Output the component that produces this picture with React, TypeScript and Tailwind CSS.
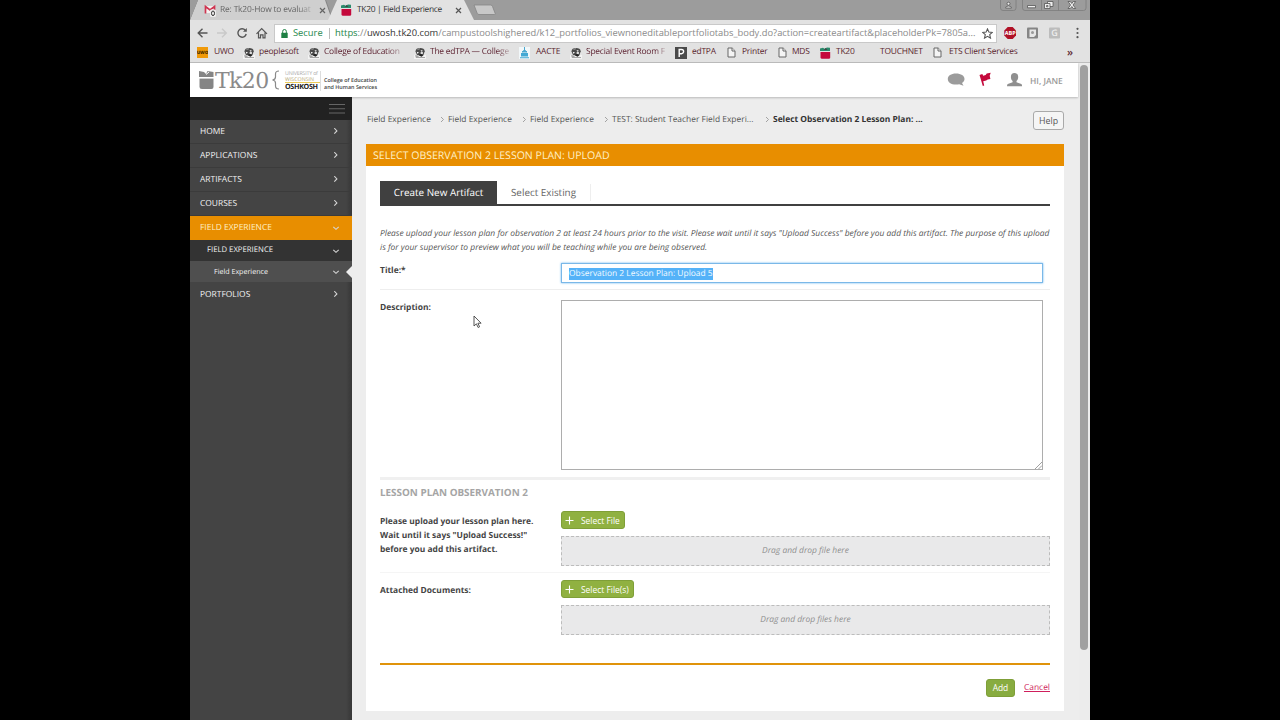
import type { ReactNode } from "react";

function Mascot() {
  return (
    <svg width="12" height="12" viewBox="0 0 12 12">
      <path d="M0 7.800h12V12H0z" fill="#f3f3f3" />
      <path d="M1.500 4.500C1.500 2 3.300 1 6 1s4.700 1 4.700 3.300L9.500 8H3z" fill="#4a4a4a" />
      <path d="M1 8.300h2.500L5 10h6v1H2z" fill="#a5a5a5" />
      <path d="M2.800 4.800l2.200.7-1.600 1.200zM6.500 3l2.500.8-1.500 1z" fill="#fff" />
      <circle cx="7.800" cy="6" r="1.300" fill="#ddd" />
      <path d="M4 8l3-1 2.500 1.200-2 1.600z" fill="#222" />
      <path d="M3.500 2.500L6 1.700" stroke="#bbb" strokeWidth=".7" />
    </svg>
  );
}

function Gift({ className = "" }: { className?: string }) {
  return (
    <svg width="11" height="12" viewBox="0 0 11 12" className={className}>
      <path d="M0 1.500l3-.7 1.500 1L7 .5l3 .3V4H0z" fill="#2b8a6c" />
      <path d="M4 3l1.500-2L7.500 3z" fill="#444" />
      <path d="M.5 5h9.700v5.500c0 .8-.5 1.200-1.200 1.200H1.700C1 11.700.5 11.200.5 10.500z" fill="#c4093c" />
    </svg>
  );
}

function PageIcon() {
  return (
    <svg width="9" height="11" viewBox="0 0 9 11" fill="#f4f4f4" stroke="#666" strokeWidth="1">
      <path d="M1 1h4.200L8 3.800V10H1z" />
      <path d="M5 1v3h3" />
    </svg>
  );
}

function Bookmark({ w, slot, icon, children }: { w: string; slot: string; icon?: ReactNode; children: ReactNode }) {
  return (
    <div className={`flex shrink-0 items-center whitespace-nowrap ${w}`}>
      <span className={`flex shrink-0 items-center ${slot}`}>{icon}</span>
      {children}
    </div>
  );
}

function Chevron({ down = false }: { down?: boolean }) {
  return (
    <svg width="8" height="8" viewBox="0 0 8 8" fill="none" stroke="#d6d6d6" strokeWidth="1.100">
      {down ? <path d="M1.300 2.800L4 5.300l2.700-2.500" /> : <path d="M2.300 .2L4.900 2.900 2.300 5.600" />}
    </svg>
  );
}

function NavRow({ children, active = false }: { children: string; active?: boolean }) {
  return (
    <div
      className={`flex h-6 items-center justify-between border-b pr-3 pl-2.5 text-[8.440px] ${
        active ? "border-[#e88e00] bg-[#e88e00] text-[#fff1c9]" : "border-[#3b3b3b] text-[#f2f2f2]"
      }`}
    >
      <span className="pt-[2px]">{children}</span>
      <Chevron down={active} />
    </div>
  );
}

function Crumb({ w, children }: { w: string; children: string }) {
  return (
    <div className={`flex shrink-0 items-center justify-between whitespace-nowrap ${w}`}>
      <span>{children}</span>
      <svg width="5" height="7" viewBox="0 0 5 7" fill="none" stroke="#9a9a9a" strokeWidth=".9" className="mr-[3px] mb-[1px]">
        <path d="M1 1l2.500 2.500L1 6" />
      </svg>
    </div>
  );
}

function SelectButton({ w, children }: { w: string; children: string }) {
  return (
    <button className={`flex h-[18px] items-center rounded-[3px] border border-[#7f9f38] bg-[#90b141] pt-[2px] pl-[3px] text-[8.440px] whitespace-nowrap text-white ${w}`}>
      <svg width="9" height="9" viewBox="0 0 9 9" stroke="#fff" strokeWidth="1.100" className="-mt-[2px] mr-[7px] shrink-0">
        <path d="M4.500 .5v8M.5 4.500h8" />
      </svg>
      {children}
    </button>
  );
}

function DropZone({ children }: { children: string }) {
  return (
    <div className="flex h-[30px] items-center justify-center border border-dashed border-[#bcbcbc] bg-[#e9e9ea] pt-px text-[8.440px] text-[#8f8f8f] italic">
      {children}
    </div>
  );
}

function TabStrip() {
  return (
    <div className="flex h-5 justify-between bg-[#9c9c9c]">
      <div className="flex">
        <div className="h-5 w-[143px] bg-[#858585] pr-px [clip-path:polygon(8px_0,136px_0,100%_100%,0_100%)]">
          <div className="flex h-full items-center bg-[#cfcfcf] pl-[14px] text-[8.440px] tracking-[-0.170px] text-[#666] [clip-path:polygon(8px_0,135px_0,100%_100%,0_100%)]">
            <svg width="13" height="13" viewBox="0 0 13 13" className="mr-[3px]">
              <path d="M1 2h10v7H1z" fill="#f4f0f0" />
              <path d="M1.500 9.500V2.500L6 6l4.500-3.500V8" fill="none" stroke="#cf3450" strokeWidth="1.700" />
              <rect x="6" y="5.500" width="6" height="7.500" rx="1.500" fill="#eee" />
              <ellipse cx="9" cy="9.300" rx="1.500" ry="2.300" fill="none" stroke="#333" />
            </svg>
            <span className="w-[94px] overflow-hidden pt-px whitespace-nowrap [mask-image:linear-gradient(to_right,#000_78px,transparent_96px)]">
              Re: Tk20-How to evaluat
            </span>
            <svg width="7" height="7" viewBox="0 0 7 7" stroke="#666" strokeWidth="1.200" className="ml-[5px]">
              <path d="M1 1l5 5M6 1L1 6" />
            </svg>
          </div>
        </div>
        <div className="-ml-[5px] flex h-5 w-[146px] items-center bg-[#e2e2e2] pl-[13px] text-[8.440px] tracking-[-0.320px] text-[#333] [clip-path:polygon(9px_0,136px_0,100%_100%,0_100%)]">
          <Gift className="mr-[5px]" />
          <span className="w-[98px] pt-px whitespace-nowrap">TK20 | Field Experience</span>
          <svg width="7" height="7" viewBox="0 0 7 7" stroke="#555" strokeWidth="1.200">
            <path d="M1 1l5 5M6 1L1 6" />
          </svg>
        </div>
        <svg width="24" height="12" viewBox="0 0 24 12" className="-ml-[1px] mt-[4px]">
          <path d="M1 1h16.500q1.500 0 2 1.500l2.700 7q.3 1-.7 1H6q-1.300 0-1.800-1.200z" fill="#c8c8c8" stroke="#858585" strokeWidth=".8" />
        </svg>
      </div>
      <svg width="91" height="12" viewBox="0 0 91 12" fill="none" stroke="#7c7c7c">
        <path d="M1.500-1v9q0 2.500 2.500 2.500h10.500q2.500 0 2.500-2.500V-1M23.500-1v9q0 2.500 2.500 2.500h58.500q2.500 0 2.500-2.500V-1M42.500 0v10.500M59.500 0v10.500" strokeWidth=".8" />
        <g stroke="#555" fill="#eee" strokeWidth=".8">
          <circle cx="9.500" cy="3.700" r="1.500" />
          <path d="M6.500 8q0-2 3-2t3 2z" />
          <path d="M28.500 5.500h8v2.300h-8z" />
          <path d="M48.500 1.500h5.500v5h-5.500z" />
          <path d="M45.500 3.500h5.500v5h-5.500zM47.500 5.500h1.500v1.300h-1.500z" />
          <path d="M69 1.500h2.300L72.800 3.500l1.500-2h2.300L74 5l2.700 3.500h-2.400l-1.500-2-1.500 2H69L71.600 5z" />
        </g>
      </svg>
    </div>
  );
}

function AddressBar() {
  return (
    <div className="flex h-[23px] items-center bg-[#e2e2e2] pt-[3px]">
      <svg width="84" height="14" viewBox="0 0 84 14" fill="none" stroke="#555" strokeWidth="1.400">
        <path d="M17.500 7H8.500M12.500 2.700L8.200 7l4.300 4.300" />
        <path d="M27 7h9M32 2.700L36.300 7 32 11.300" stroke="#c9c9c9" />
        <path d="M55.300 4.200A4.200 4.200 0 1 0 56.200 8" />
        <path d="M56.800 2v3.800H53z" fill="#555" stroke="none" />
        <path d="M66.500 7.800L71.700 2.500 77 7.800M68.500 6.500v5.300h2v-3h2.500v3h2V6.500" strokeWidth="1.200" />
      </svg>
      <div className="flex h-[19px] w-[723px] items-center border border-[#c9c9c9] bg-white pl-[6px] text-[9.350px] whitespace-nowrap text-[#8b8b8b]">
        <svg width="7" height="9" viewBox="0 0 7 9" className="mr-[5px] shrink-0">
          <path d="M.3 3.800h6.400V9H.3z" fill="#1f8044" />
          <path d="M1.700 4V2.300a1.800 1.800 0 0 1 3.600 0V4" fill="none" stroke="#1f8044" />
        </svg>
        <span className="w-[36px] text-[#23864a]">Secure</span>
        <span className="mr-[5px] h-[11px] w-px bg-[#bbb]" />
        <span className="w-[651px] shrink-0">
          <span className="text-[#23864a]">https</span>://<span className="text-[#333]">uwosh.tk20.com</span>
          /campustoolshighered/k12_portfolios_viewnoneditableportfoliotabs_body.do?action=createartifact&amp;placeholderPk=7805a...
        </span>
        <svg width="11" height="11" viewBox="0 0 11 11" fill="none" stroke="#555" strokeWidth="1.100" className="-ml-[4px] shrink-0">
          <path d="M5.500 .9l1.400 3.200 3.400.3-2.600 2.300.8 3.400-3-1.800-3 1.800.8-3.400L.7 4.400l3.400-.3z" />
        </svg>
      </div>
      <svg width="92" height="14" viewBox="0 0 92 14" className="ml-px font-['Open_Sans',sans-serif]">
        <path d="M9.700 1h5l3.300 3.500v5L14.700 13h-5L6.300 9.500v-5z" fill="#b01126" />
        <text x="12.200" y="9.200" fontSize="5.500" fontWeight="700" fill="#fff" textAnchor="middle">ABP</text>
        <rect x="29" y="1.500" width="11" height="11" rx="1" fill="#858585" />
        <path d="M31.500 3.500H38V9l-2 2h-4.500z" fill="#e6e6e6" />
        <circle cx="34.500" cy="6.500" r="1.500" fill="#999" />
        <rect x="51" y="1.500" width="11" height="11" rx="1" fill="#bcbcbc" />
        <text x="56.500" y="10.300" fontSize="9" fontWeight="600" fill="#eee" textAnchor="middle">G</text>
        <g fill="#555">
          <circle cx="79.500" cy="2.800" r="1.100" />
          <circle cx="79.500" cy="7" r="1.100" />
          <circle cx="79.500" cy="11.200" r="1.100" />
        </g>
      </svg>
    </div>
  );
}

function BookmarksBar() {
  return (
    <div className="flex h-5 items-center border-b border-[#bdbdbd] bg-[#e2e2e2] pl-[7px] text-[8.440px] tracking-[-0.220px] text-[#5a1f2e]">
      <Bookmark w="w-[46px]" slot="w-[17px]" icon={
        <svg width="11" height="11" viewBox="0 0 11 11">
          <rect width="11" height="11" fill="#f09a0a" />
          <text x="5.500" y="7.300" fontSize="4.500" fontWeight="800" fill="#4a2f00" textAnchor="middle" letterSpacing="0">UWO</text>
        </svg>
      }>UWO</Bookmark>
      <Bookmark w="w-[65px]" slot="w-[16px]" icon={<Mascot />}>peoplesoft</Bookmark>
      <Bookmark w="w-[106px]" slot="w-[16px]" icon={<Mascot />}>
        <span className="[mask-image:linear-gradient(to_right,#000_62px,transparent_84px)]">College of Education</span>
      </Bookmark>
      <Bookmark w="w-[105px]" slot="w-[16px]" icon={<Mascot />}>
        <span className="w-[79px] overflow-hidden [mask-image:linear-gradient(to_right,#000_66px,transparent_84px)]">The edTPA — College</span>
      </Bookmark>
      <Bookmark w="w-[51px]" slot="w-[17px]" icon={
        <svg width="11" height="12" viewBox="0 0 11 12">
          <rect width="11" height="12" fill="#f2f8fa" />
          <path d="M5.500 0v4M3 5l2.500-2L8 5z" fill="#4aa8cf" stroke="#4aa8cf" />
          <path d="M2 6h7v3.500H2zM1 10.300h9v1H1z" fill="#43a9d4" />
        </svg>
      }>AACTE</Bookmark>
      <Bookmark w="w-[105px]" slot="w-[16px]" icon={<Mascot />}>
        <span className="w-[79px] overflow-hidden [mask-image:linear-gradient(to_right,#000_70px,transparent_82px)]">Special Event Room F</span>
      </Bookmark>
      <Bookmark w="w-[52px]" slot="w-[17px]" icon={
        <svg width="12" height="12" viewBox="0 0 12 12">
          <rect width="12" height="12" fill="#4a4a4a" />
          <path d="M4.200 10V2.500h2.300a2 2 0 0 1 0 4.200H4.200" fill="none" stroke="#fff" strokeWidth="1.400" />
        </svg>
      }>edTPA</Bookmark>
      <Bookmark w="w-[51px]" slot="w-[15px]" icon={<PageIcon />}>Printer</Bookmark>
      <Bookmark w="w-[42px]" slot="w-[14px]" icon={<PageIcon />}>MDS</Bookmark>
      <Bookmark w="w-[44px]" slot="w-[16px]" icon={<Gift />}>TK20</Bookmark>
      <Bookmark w="w-[69px]" slot="w-[16px]">TOUCHNET</Bookmark>
      <Bookmark w="w-[134px]" slot="w-[16px]" icon={<PageIcon />}>ETS Client Services</Bookmark>
      <span className="text-[11px] leading-none font-semibold">»</span>
    </div>
  );
}

function SiteHeader() {
  return (
    <header className="z-10 flex h-[34px] w-[888px] shrink-0 items-center bg-white pl-[9px] shadow-[0_1px_2px_rgba(0,0,0,0.22)]">
      <svg width="15" height="18" viewBox="0 0 15 18" fill="#858585" className="shrink-0">
        <path d="M0 0l5 1 2 2 1.500-3 6 1v5H0z" />
        <path d="M7 3.500L10 1" stroke="#fff" strokeWidth="1" />
        <path d="M.5 7.500h14V16q0 2-2 2H3q-2.500 0-2.500-2.500z" />
        <path d="M0 6.200h15v1H0z" fill="#fff" />
      </svg>
      <span className="mt-[3px] ml-[1px] w-[57px] shrink-0 [font-family:'DejaVu_Serif',serif] text-[22px] leading-none tracking-[-0.600px] whitespace-nowrap text-[#8a8a8a]">
        Tk20
      </span>
      <svg width="9" height="20" viewBox="0 0 9 20" fill="none" stroke="#8a8a8a" strokeWidth="1.200" className="-ml-px shrink-0">
        <path d="M8 1Q4.500 1 4.500 4v3q0 2.500-3 3 3 .5 3 3v3q0 3 3.500 3" />
      </svg>
      <div className="mt-[2px] ml-[5px] flex h-[20px] w-[36px] shrink-0 flex-col border-r border-[#ddd] text-[5.300px] leading-[5.500px] whitespace-nowrap">
        <span className="tracking-[-0.200px] text-[#aaa]">UNIVERSITY of</span>
        <span className="h-[7px] border-b border-[#eccb57] text-[#b5a878]">WISCONSIN</span>
        <span className="text-[7.200px] leading-[8px] font-bold tracking-[-0.350px] text-[#222]">OSHKOSH</span>
      </div>
      <div className="mt-[8px] ml-[3px] w-[623px] shrink-0 text-[5.400px] leading-[7px] font-semibold text-[#444]">
        College of Education
        <br />
        and Human Services
      </div>
      <svg width="78" height="18" viewBox="0 0 78 18" className="mt-[-1px] shrink-0">
        <path d="M9 2.500c5 0 8.500 2.300 8.500 5.500 0 1.700-1 3-2.500 4l1.500 2.800-4.300-1.600c-1 .3-2 .4-3.200.4C4 13.600.8 11.200.8 8S4 2.500 9 2.500z" fill="#9b9b9b" />
        <path d="M32.500 4l2.800-1 .9 1.800 2.500-.9 1-1.300 4-.8-1 3 .7 3.300-2.700.3-1.500 1.200-3 .7 1 4.300-1.400.4z" fill="#c4093c" />
        <path d="M67.500 2c2.500 0 3.700 1.500 3.700 4 0 2-.8 3.200-1.700 4v1.200l4.800 1.700q.8.400.8 2.300H60q0-1.900.8-2.300l4.800-1.700V10c-1-.8-1.700-2-1.700-4 0-2.500 1.200-4 3.600-4z" fill="#8f8f8f" />
      </svg>
      <span className="mt-[5px] ml-[5px] text-[8.440px] font-semibold whitespace-nowrap text-[#999]">HI, JANE</span>
    </header>
  );
}

function Sidebar() {
  return (
    <nav className="flex w-[162px] shrink-0 flex-col bg-[#444] bg-[linear-gradient(to_right,transparent_156px,rgba(0,0,0,0.2))]">
      <div className="flex h-[23px] items-center justify-end bg-[#222] pr-[7px]">
        <svg width="16" height="12" viewBox="0 0 16 12" stroke="#666" strokeWidth="1.100">
          <path d="M0 1.500h16M0 5.700h16M0 10h16" />
        </svg>
      </div>
      <NavRow>HOME</NavRow>
      <NavRow>APPLICATIONS</NavRow>
      <NavRow>ARTIFACTS</NavRow>
      <NavRow>COURSES</NavRow>
      <NavRow active>FIELD EXPERIENCE</NavRow>
      <div className="flex h-[21px] items-center justify-between bg-[#333] pr-3 pl-[17px] text-[7.740px] text-[#f4f4f4]">
        <span className="pt-px">FIELD EXPERIENCE</span>
        <Chevron down />
      </div>
      <div className="relative flex h-[21px] items-center justify-between bg-[#4f4f4f] pr-3 pl-6 text-[7.120px] text-[#f4f4f4]">
        <span className="pt-px">Field Experience</span>
        <Chevron down />
        <svg width="6" height="12" viewBox="0 0 6 12" className="absolute top-[5px] right-0">
          <path d="M6 0v12L0 6z" fill="#ededed" />
        </svg>
      </div>
      <div className="pt-px">
        <div className="flex h-6 items-center justify-between pr-3 pl-2.5 text-[8.440px] text-[#f2f2f2]">
          <span className="pt-px">PORTFOLIOS</span>
          <Chevron />
        </div>
      </div>
    </nav>
  );
}

function ArtifactForm() {
  return (
    <section className="h-[567px] w-[698px] bg-white">
      <h1 className="flex h-[22px] items-center bg-[#e88e00] pt-[3px] pl-[7px] text-[10.560px] text-[#fff1c9]">
        SELECT OBSERVATION 2 LESSON PLAN: UPLOAD
      </h1>
      <div className="mx-[14px] mt-[15px] flex h-[25px] items-end border-b-2 border-[#404040] text-[9.900px]">
        <div className="flex h-[23px] w-[117px] items-center justify-center bg-[#404040] text-white">Create New Artifact</div>
        <div className="mb-[3px] flex h-[17px] w-[94px] items-center justify-center border-r border-[#eee] text-[#666]">Select Existing</div>
      </div>
      <p className="mx-[14px] mt-[21px] text-[8.430px] leading-[14px] whitespace-nowrap text-[#555] italic">
        Please upload your lesson plan for observation 2 at least 24 hours prior to the visit. Please wait until it says "Upload Success" before you add this artifact. The purpose of this upload
        <br />
        is for your supervisor to preview what you will be teaching while you are being observed.
      </p>
      <div className="mx-[14px] flex h-[35px] border-b border-[#eee] pt-[8px] text-[8.440px]">
        <label className="w-[181px] pt-px leading-[14px] font-bold text-[#444]">Title:*</label>
        <div className="flex h-[20px] w-[482px] items-center border border-[#7ab8e8] pt-px pl-[7px] shadow-[0_0_2px_#68b4f0]">
          <span className="bg-[#54b2f8] leading-[12px] text-[#f3faff]">Observation 2 Lesson Plan: Upload 5</span>
        </div>
      </div>
      <div className="mx-[14px] flex h-[190px] border-b-[3px] border-[#f0f0f0] pt-[10px] text-[8.440px]">
        <label className="w-[181px] pt-px leading-[14px] font-bold text-[#444]">Description:</label>
        <div className="flex h-[170px] w-[482px] items-end justify-end border border-[#adadad]">
          <svg width="7" height="7" viewBox="0 0 7 7" stroke="#888" strokeWidth=".8">
            <path d="M0 7l7-7M3.500 7L7 3.500" />
          </svg>
        </div>
      </div>
      <h2 className="mx-[14px] mt-[5px] text-[9.880px] leading-[14px] font-bold text-[#a5a5a5]">LESSON PLAN OBSERVATION 2</h2>
      <div className="mx-[14px] mt-[12px] flex h-[62px] border-b border-[#f5f5f5]">
        <div className="w-[181px] pt-[4px] text-[8.440px] leading-[14px] font-bold text-[#444]">
          Please upload your lesson plan here.
          <br />
          Wait until it says "Upload Success!"
          <br />
          before you add this artifact.
        </div>
        <div className="flex w-[489px] flex-col gap-[7px]">
          <SelectButton w="w-[64px]">Select File</SelectButton>
          <DropZone>Drag and drop file here</DropZone>
        </div>
      </div>
      <div className="mx-[14px] flex h-[92px] border-b-2 border-[#e0930a] pt-[7px]">
        <div className="w-[181px] pt-[4px] text-[8.440px] leading-[14px] font-bold text-[#444]">Attached Documents:</div>
        <div className="flex w-[489px] flex-col gap-[7px]">
          <SelectButton w="w-[73px]">Select File(s)</SelectButton>
          <DropZone>Drag and drop files here</DropZone>
        </div>
      </div>
      <div className="mx-[14px] mt-[14px] flex items-center justify-end gap-[9px] text-[8.440px]">
        <button className="flex h-[18px] w-[29px] items-center justify-center rounded-[3px] border border-[#7f9f38] bg-[#88ac40] pt-px text-white">Add</button>
        <a className="text-[#cf1f5c] underline">Cancel</a>
      </div>
    </section>
  );
}

export default function App() {
  return (
    <div className="flex h-[720px] w-[1280px] justify-center overflow-hidden bg-black font-['Open_Sans',sans-serif] [text-rendering:geometricPrecision]">
      <div className="flex h-[720px] w-[900px] flex-col overflow-hidden bg-[#ededed]">
        <TabStrip />
        <AddressBar />
        <BookmarksBar />
        <div className="flex min-h-0 flex-1">
          <div className="flex w-[889px] shrink-0 flex-col">
            <SiteHeader />
            <div className="flex min-h-0 flex-1">
              <Sidebar />
              <main className="relative pl-[14px]">
                <div className="flex h-[47px] pl-px text-[8.440px] leading-[14px] text-[#555]">
                  <div className="flex w-[666px] items-start pt-[16px]">
                    <Crumb w="w-[81px]">Field Experience</Crumb>
                    <Crumb w="w-[82px]">Field Experience</Crumb>
                    <Crumb w="w-[82px]">Field Experience</Crumb>
                    <Crumb w="w-[161px]">TEST: Student Teacher Field Experi...</Crumb>
                    <span className="font-bold whitespace-nowrap text-[#333]">Select Observation 2 Lesson Plan: ...</span>
                  </div>
                  <button className="mt-[14px] flex h-[19px] w-[31px] items-center justify-center rounded-[3px] border border-[#a9a9a9] bg-[#f5f5f5] text-[8.800px]">
                    Help
                  </button>
                </div>
                <ArtifactForm />
                <svg width="9" height="14" viewBox="0 0 9 14" className="absolute top-[218px] left-[121px]">
                  <path d="M1 1v10l2.400-2.200 1.700 3.700 1.500-.7-1.700-3.600h3.200z" fill="#fff" stroke="#444" strokeWidth=".9" />
                </svg>
              </main>
            </div>
          </div>
          <div className="w-[11px] bg-[#ececec] pt-[2px] pl-[1px]">
            <div className="h-[585px] w-[8px] rounded-full bg-[#a0a0a0]" />
          </div>
        </div>
      </div>
    </div>
  );
}
